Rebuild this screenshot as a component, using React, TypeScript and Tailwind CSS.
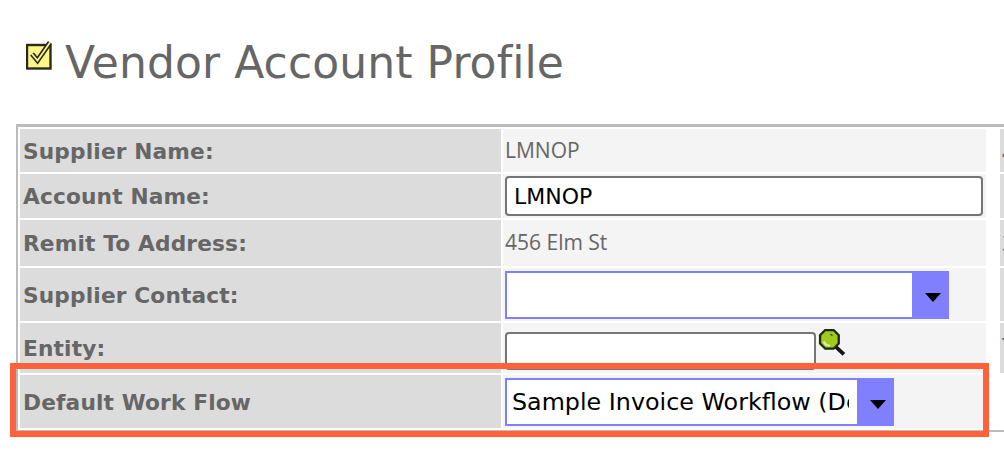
const sans = "font-['DejaVu_Sans',Verdana,sans-serif]";
const thin = "font-['Open_Sans',sans-serif]";

function CheckIcon() {
  return (
    <svg width="28" height="31" viewBox="0 0 28 31" className="shrink-0">
      <rect x="1" y="6" width="23.5" height="23.5" fill="#fbf58a" stroke="#2b2b1c" strokeWidth="2.4" />
      <path d="M6 15l5.5 6.5L24 3.5" fill="none" stroke="#2b2b1c" strokeWidth="5" />
      <path d="M6 15l5.5 6.5L24 3.5" fill="none" stroke="#fbf58a" strokeWidth="1.8" />
    </svg>
  );
}

function SearchIcon() {
  return (
    <svg width="28" height="28" viewBox="0 0 27 27" className="shrink-0">
      <path d="M17 17l8 7.5" stroke="#161616" strokeWidth="3.6" />
      <path d="M7 1h8l5 5v8l-5 5H7l-5-5V6z" fill="#a0cb1c" stroke="#1c2a12" strokeWidth="2.2" />
      <path d="M5.5 12a6 6 0 0 0 6 4" fill="none" stroke="#dcebb0" strokeWidth="2.2" />
      <path d="M12 5l2 1.5" fill="none" stroke="#3f5a10" strokeWidth="1.4" />
    </svg>
  );
}

function Caret() {
  return (
    <div className="w-[37px] shrink-0 bg-[#8080ff] flex items-center justify-center pl-[4px] pt-[6px]">
      <div className="w-0 h-0 border-x-[8px] border-x-transparent border-t-[9px] border-t-black" />
    </div>
  );
}

function Row({ label, height, next, children }: { label: string; height: string; next?: string; children: React.ReactNode }) {
  return (
    <div className={`flex ${height}`}>
      <div className={`w-[481px] shrink-0 bg-[#dcdcdc] flex items-center pl-[3px] pt-[3px] text-[21.7px] tracking-[0.15px] font-bold text-[#666666] ${sans}`}>
        {label}
      </div>
      <div className="ml-[2px] w-[483px] shrink-0 bg-[#f4f4f4] flex items-center pl-[2px] text-[#666666]">{children}</div>
      {next !== undefined && (
        <div className={`ml-[14px] w-[4px] shrink-0 overflow-hidden bg-[#dcdcdc] pl-[2px] pt-[8px] text-[21px] text-[#666666] ${thin}`}>
          {next}
        </div>
      )}
    </div>
  );
}

export default function App() {
  return (
    <div className="relative w-[1004px] h-[463px] bg-white overflow-hidden">
      <div className="flex items-start pl-[26px] pt-[39px] h-[124px]">
        <CheckIcon />
        <h1 className={`ml-[11px] -mt-[2px] text-[44px] tracking-[0.09px] leading-[52px] font-normal whitespace-nowrap text-[#666666] ${sans}`}>
          Vendor Account Profile
        </h1>
      </div>

      <div className="ml-[16px] border-l-[2px] border-t-[3px] border-b-[2px] border-[#bbbbbb] pl-[2px] pt-[2px] pb-[2px] flex flex-col gap-[2px] h-[308px]">
        <Row label="Supplier Name:" height="h-[43px]" next="4">
          <span className={`pt-[1px] text-[21px] ${thin}`}>LMNOP</span>
        </Row>
        <Row label="Account Name:" height="h-[44px]" next="">
          <div className={`w-[478px] h-[40px] bg-white border-2 border-[#767676] rounded-[4px] flex items-center pl-[7px] pt-[1px] text-[22px] text-black ${sans}`}>
            LMNOP
          </div>
        </Row>
        <Row label="Remit To Address:" height="h-[46px]" next="3">
          <span className={`text-[21px] ${thin}`}>456 Elm St</span>
        </Row>
        <Row label="Supplier Contact:" height="h-[53px]" next="">
          <div className="w-[444px] h-[48px] flex border-2 border-r-0 border-[#8080ff] bg-white">
            <div className="flex-1" />
            <Caret />
          </div>
        </Row>
        <Row label="Entity:" height="h-[50px]" next="T">
          <div className="flex items-start h-full pt-[9px]">
            <div className="w-[311px] h-[38px] bg-white border-2 border-[#767676] rounded-[4px]" />
            <div className="-mt-[3px] ml-[2px]">
              <SearchIcon />
            </div>
          </div>
        </Row>
        <Row label="Default Work Flow" height="h-[53px]">
          <div className={`w-[389px] h-[48px] flex border-2 border-r-0 border-[#8080ff] bg-white text-[23.8px] text-black ${sans}`}>
            <div className="w-[350px] shrink-0 pl-[5px] pr-[8px]">
              <div className="h-full flex items-center pt-[2px] overflow-hidden whitespace-nowrap">Sample Invoice Workflow (Default)</div>
            </div>
            <Caret />
          </div>
        </Row>
      </div>

      <div className="absolute left-[10px] top-[363px] w-[979px] h-[74px] border-[6px] border-[#ff623b]" />
    </div>
  );
}
